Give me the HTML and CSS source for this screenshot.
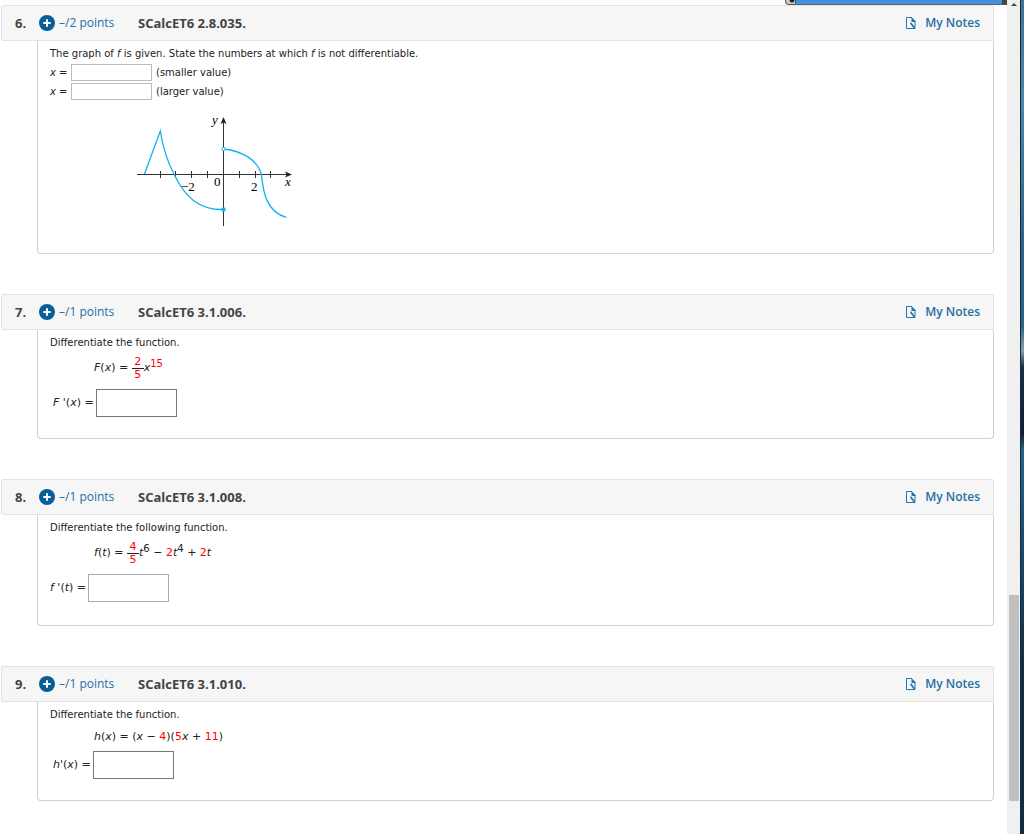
FILE: index.html
```html
<!DOCTYPE html>
<html lang="en">
<head>
    <meta charset="UTF-8">
    <meta name="viewport" content="width=device-width, initial-scale=1.0">
    <title>Homework</title>
    <link rel="stylesheet" href="styles.css">
</head>
<body>
    <!-- shared icons -->
    <svg class="defs" aria-hidden="true">
        <symbol id="icon-plus" viewBox="0 0 16 16">
            <circle cx="8" cy="8" r="8" fill="#075f98"/>
            <path d="M8 4.3v7.4M4.3 8h7.4" stroke="#fff" stroke-width="2" fill="none"/>
        </symbol>
        <symbol id="icon-note" viewBox="0 0 10 12">
            <path d="M6 .5H.5v11h8.500V4" fill="none" stroke="#2475ab" stroke-width="1"/>
            <path d="M5.500 0L9.500 4v1h-4z" fill="#2475ab"/>
            <path d="M4 5.500l1.500.3 3.500 4.500v1.200H7.800L4.300 7z" fill="#2475ab"/>
        </symbol>
    </svg>

    <main class="page">
        <div class="window-edge">
            <span class="window-corner"></span>
            <span class="window-bar"></span>
        </div>

        <section class="question">
            <header class="question-header">
                <span class="number">6.</span>
                <a class="points" href="#"><svg class="plus"><use href="#icon-plus"/></svg>–/2 points</a>
                <h2>SCalcET6 2.8.035.</h2>
                <a class="notes" href="#"><svg class="note"><use href="#icon-note"/></svg>My Notes</a>
            </header>
            <div class="question-body">
                <p>The graph of <i>f</i> is given. State the numbers at which <i>f</i> is not differentiable.</p>
                <div class="small-row">
                    <label for="q6a"><i>x</i> =</label>
                    <input type="text" id="q6a">
                    <span>(smaller value)</span>
                </div>
                <div class="small-row">
                    <label for="q6b"><i>x</i> =</label>
                    <input type="text" id="q6b">
                    <span>(larger value)</span>
                </div>
                <svg class="graph" viewBox="0 0 170 120" role="img" aria-label="Graph of f">
                    <!-- axes -->
                    <g stroke="#333" stroke-width="1" fill="none">
                        <path d="M7 64.5h150M93.500 10v106"/>
                        <path d="M30.500 61v7M45.500 61v7M61.500 61v7M77.500 61v7M109.500 61v7M125.500 61v7M140.500 61v7"/>
                    </g>
                    <path d="M162 64.500l-7-3 1.500 3-1.500 3zM93.500 7l-3 7 3-1.500 3 1.500z" fill="#222"/>
                    <!-- curve -->
                    <g stroke="#0db0f0" stroke-width="1.300" fill="none">
                        <path d="M14.500 64L30.300 21C33 38 38 53 44.500 65C55 87 69 100 93.500 99.500"/>
                        <path d="M93.500 39C112 41 128 50 131.500 65C133 77 134 101 156.500 107.500"/>
                    </g>
                    <circle cx="93.500" cy="39" r="1.700" fill="#fff" stroke="#0db0f0"/>
                    <circle cx="93.500" cy="99.500" r="2.200" fill="#0db0f0"/>
                    <text class="axis" x="82" y="14">y</text>
                    <text class="axis" x="155" y="76">x</text>
                    <text x="84" y="76">0</text>
                    <text x="51" y="81">−2</text>
                    <text x="121" y="81">2</text>
                </svg>
            </div>
        </section>

        <section class="question">
            <header class="question-header">
                <span class="number">7.</span>
                <a class="points" href="#"><svg class="plus"><use href="#icon-plus"/></svg>–/1 points</a>
                <h2>SCalcET6 3.1.006.</h2>
                <a class="notes" href="#"><svg class="note"><use href="#icon-note"/></svg>My Notes</a>
            </header>
            <div class="question-body">
                <p>Differentiate the function.</p>
                <div class="formula">
                    <span><i>F</i>(<i>x</i>) =&nbsp;</span>
                    <span class="fraction"><span>2</span><span>5</span></span>
                    <span><i>x</i><sup class="red">15</sup></span>
                </div>
                <div class="answer indent">
                    <label for="q7"><i>F</i> '(<i>x</i>) =</label>
                    <input type="text" id="q7">
                </div>
            </div>
        </section>

        <section class="question">
            <header class="question-header">
                <span class="number">8.</span>
                <a class="points" href="#"><svg class="plus"><use href="#icon-plus"/></svg>–/1 points</a>
                <h2>SCalcET6 3.1.008.</h2>
                <a class="notes" href="#"><svg class="note"><use href="#icon-note"/></svg>My Notes</a>
            </header>
            <div class="question-body">
                <p>Differentiate the following function.</p>
                <div class="formula">
                    <span><i>f</i>(<i>t</i>) =&nbsp;</span>
                    <span class="fraction"><span>4</span><span>5</span></span>
                    <span><i>t</i><sup>6</sup> − <span class="red">2</span><i>t</i><sup>4</sup> + <span class="red">2</span><i>t</i></span>
                </div>
                <div class="answer light">
                    <label for="q8"><i>f</i> '(<i>t</i>) =</label>
                    <input type="text" id="q8">
                </div>
            </div>
        </section>

        <section class="question">
            <header class="question-header">
                <span class="number">9.</span>
                <a class="points" href="#"><svg class="plus"><use href="#icon-plus"/></svg>–/1 points</a>
                <h2>SCalcET6 3.1.010.</h2>
                <a class="notes" href="#"><svg class="note"><use href="#icon-note"/></svg>My Notes</a>
            </header>
            <div class="question-body">
                <p>Differentiate the function.</p>
                <div class="formula plain">
                    <span><i>h</i>(<i>x</i>) = (<i>x</i> − <span class="red">4</span>)(<span class="red">5</span><i>x</i> + <span class="red">11</span>)</span>
                </div>
                <div class="answer indent">
                    <label for="q9"><i>h</i>'(<i>x</i>) =</label>
                    <input type="text" id="q9">
                </div>
            </div>
        </section>
    </main>

    <div class="scrollbar" aria-hidden="true">
        <span class="arrow"></span>
        <span class="thumb"></span>
    </div>
    <div class="desktop" aria-hidden="true"></div>
</body>
</html>
```
FILE: styles.css
```css
* {
    margin: 0;
    padding: 0;
    box-sizing: border-box;
}

body {
    display: flex;
    min-height: 100vh;
    background-color: #fff;
    color: #222;
    font-family: Verdana, 'DejaVu Sans', sans-serif;
    font-size: 11px;
    line-height: 18px;
}

a {
    color: #2570a5;
    text-decoration: none;
}

.defs {
    position: absolute;
    width: 0;
    height: 0;
}

.page {
    flex: 1;
    min-width: 0;
}

/* bottom edge of the window lying over the page */
.window-edge {
    display: flex;
    justify-content: flex-end;
    height: 5px;
}

.window-corner {
    width: 11px;
    background: radial-gradient(circle at 6px 0, #222 2px, #ccc 3px);
    border: 1px solid #555;
    border-top: none;
    border-radius: 0 0 0 4px;
}

.window-bar {
    width: 211px;
    background-color: #4490dc;
    border-right: 5px solid #444;
    border-bottom: 1px solid #567;
}

.question {
    margin: 0 13px 40px 1px;
}

.question:last-child {
    margin-bottom: 0;
}

.question-header {
    display: flex;
    align-items: center;
    height: 36px;
    padding: 0 13px;
    background-color: #f6f6f6;
    border: 1px solid #e3e3e3;
    border-radius: 2px;
    font-family: 'Open Sans', sans-serif;
    font-size: 12px;
}

.number {
    width: 24px;
    color: #444;
    font-size: 13px;
    font-weight: 700;
}

.points {
    display: flex;
    align-items: center;
    gap: 4px;
    width: 99px;
    font-weight: 500;
}

.plus {
    width: 16px;
    height: 16px;
}

.question-header h2 {
    color: #444;
    font-size: 13px;
    font-weight: 700;
}

.notes {
    display: flex;
    align-items: center;
    gap: 9px;
    margin-left: auto;
    font-weight: 600;
}

.note {
    width: 10px;
    height: 12px;
}

.question-body {
    margin-left: 36px;
    padding: 4px 12px 21px;
    border: 1px solid #d0d0d0;
    border-top: none;
    border-radius: 0 0 4px 4px;
}

.question-body p {
    font-size: 10px;
}

.small-row {
    display: flex;
    align-items: center;
    gap: 4px;
    height: 19px;
    font-size: 10px;
}

.small-row label {
    width: 17px;
    white-space: nowrap;
}

.small-row input {
    width: 81px;
    height: 17px;
    border: 1px solid #bbb;
}

.graph {
    display: block;
    width: 170px;
    height: 120px;
    margin: 9px 0 2px 80px;
    font-family: 'Liberation Serif', serif;
    font-size: 13px;
}

.axis {
    font-style: italic;
}

.formula {
    display: flex;
    align-items: center;
    height: 32px;
    margin: 0 0 5px 44px;
}

.formula.plain {
    height: 26px;
    margin-bottom: 1px;
}

.fraction {
    display: inline-flex;
    flex-direction: column;
    color: #f00;
    line-height: 12px;
    text-align: center;
}

.fraction span {
    width: 12px;
}

.fraction span:first-child {
    border-bottom: 1px solid #222;
}

sup {
    font-size: 10px;
    line-height: 0;
    vertical-align: 4px;
}

.red {
    color: #f00;
}

.answer {
    display: flex;
    align-items: center;
    gap: 2px;
}

.answer.indent {
    margin-left: 3px;
}

.answer.light {
    padding-bottom: 2px;
}

.answer input {
    width: 81px;
    height: 28px;
    border: 1px solid #777;
}

.answer.light input {
    border-color: #aaa;
}

.scrollbar {
    display: flex;
    flex-direction: column;
    align-items: center;
    justify-content: space-between;
    width: 13px;
    padding: 3px 0 33px;
    background-color: #f0f0f0;
}

.arrow {
    border: 3px solid transparent;
    border-top: none;
    border-bottom-color: #444;
}

.thumb {
    width: 10px;
    height: 206px;
    background-color: #c0c0c0;
}

.desktop {
    width: 4px;
    border-left: 1px solid #1c2a38;
    background: linear-gradient(#3f7396, #4d86a8 12%, #2b6285 30%, #276385 39%, #8aa0aa 42%, #14304a 44%, #101c35 52%, #24658a 54%, #1b4a6e 65%, #0e2f4b 80%, #0a3049);
}
```
